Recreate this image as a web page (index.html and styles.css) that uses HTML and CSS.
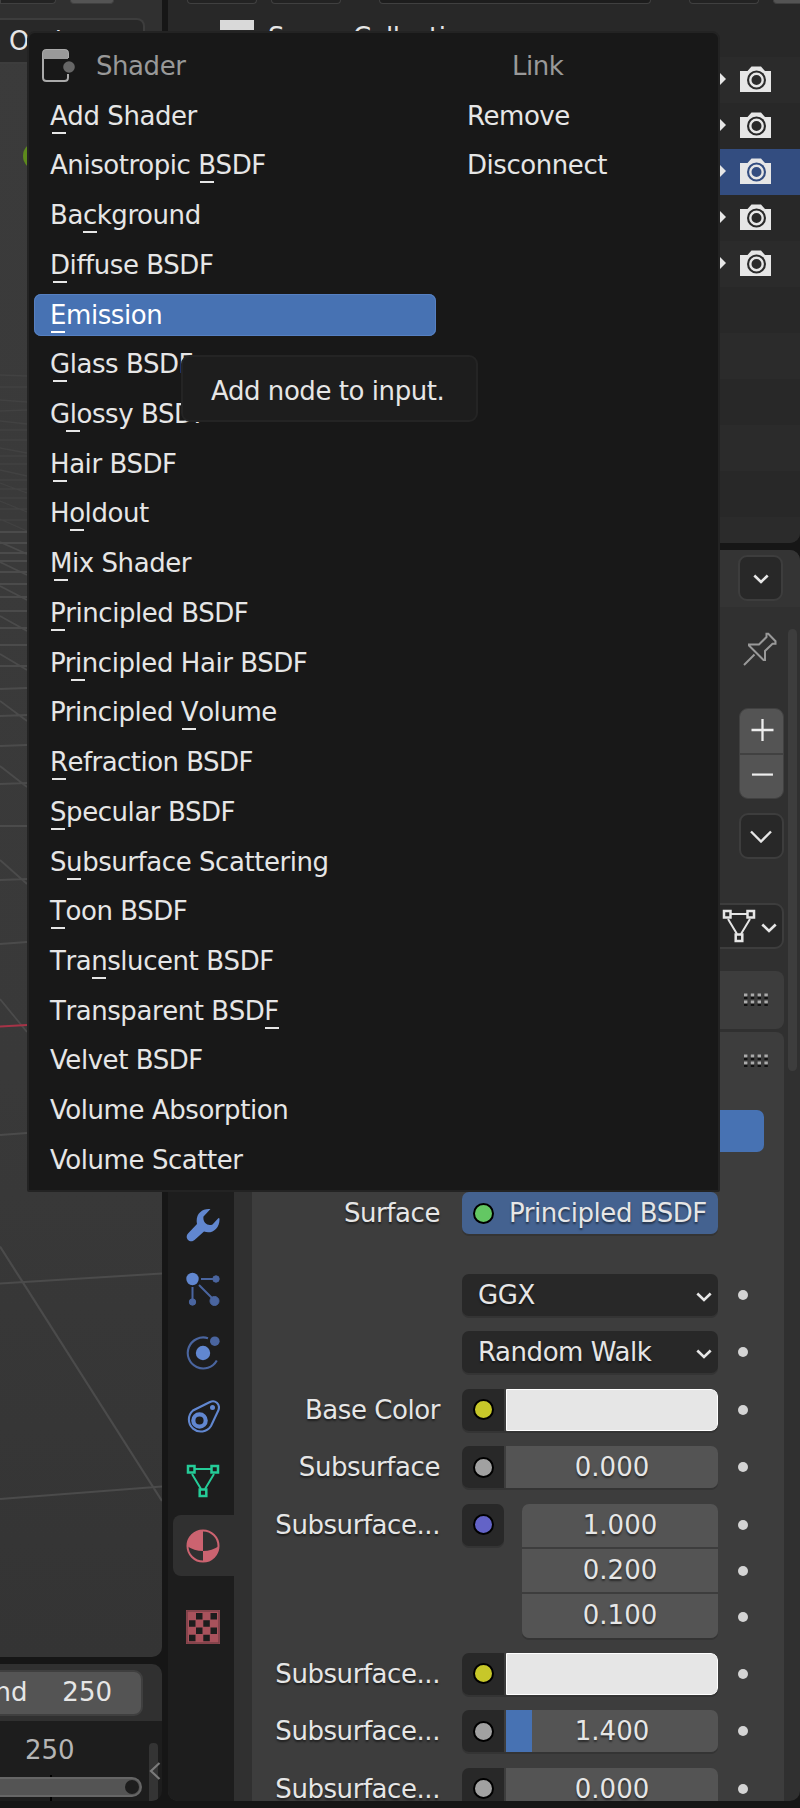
FILE: index.html
```
<!DOCTYPE html>
<html lang="en">
<head>
    <meta charset="utf-8">
    <title>Shader Node Menu</title>
    <link rel="stylesheet" href="styles.css">
</head>
<body>
    <!-- shared icons -->
    <svg class="defs" width="0" height="0">
        <symbol id="camera" viewBox="0 0 32 28">
            <path fill="#e6e6e6" d="M0 6h7.500l4-4.500h9.500l4 4.500h6v21H0z"/>
            <circle cx="16.500" cy="15" r="9.500" fill="var(--row)"/>
            <circle cx="16.500" cy="15" r="6.200" fill="var(--row)" stroke="#e6e6e6" stroke-width="2.400"/>
        </symbol>
        <symbol id="chevron" viewBox="0 0 16 10">
            <path d="M1.300 1.500l6.700 6.500 6.700-6.500" fill="none" stroke="#e6e6e6" stroke-width="2.600"/>
        </symbol>
        <symbol id="mesh" viewBox="0 0 34 34">
            <path d="M9 5h16M6 10l9 15M28 10l-9 15" fill="none" stroke="currentColor" stroke-width="2"/>
            <path d="M2 2h6.500v6.500H2zM25.500 2H32v6.500h-6.500zM13.700 25.500h6.600V32h-6.600z" fill="none" stroke="currentColor" stroke-width="2.500"/>
        </symbol>
        <symbol id="grip" viewBox="0 0 26 13">
            <path d="M1 4.500h3.400M7.800 4.500h3.400M14.600 4.500H18M21.400 4.500h3.400M1 11.500h3.400M7.800 11.500h3.400M14.600 11.500H18M21.400 11.500h3.400" stroke="#111" stroke-width="3"/>
            <path d="M1 2h3.400M7.800 2h3.400M14.600 2H18M21.400 2h3.400M1 9h3.400M7.800 9h3.400M14.600 9H18M21.400 9h3.400" stroke="#aaa" stroke-width="2.800"/>
        </symbol>
    </svg>

    <div class="app">
        <div class="left">
            <div class="viewport">
                <div class="view-header">
                    <div class="cut-row"><span class="cut wide"></span><span class="cut lit"></span></div>
                    <div class="options">Options</div>
                </div>
                <svg class="scene" width="162" height="1593" viewBox="0 64 162 1593">
                    <circle cx="37" cy="156" r="14" fill="#5d8a1c"/>
                    <g stroke="#424242" stroke-width="1.300" fill="none">
                        <path d="M0 375l27 1M0 387h27M0 400l27 2M0 411l27-1M0 421l27 3M0 430h27M0 440h27M0 448l27 5M0 456h27M0 464h27M0 470l27 6M0 480h27M0 489h27M0 483l27 10M0 498h27M0 509h27M0 501l27 11M0 520h27M0 519l27 12"/>
                    </g>
                    <g stroke="#4b4b4b" stroke-width="1.800" fill="none">
                        <path d="M0 532h27M0 543h27M0 553h27M0 542l27 12M0 561h27M0 572h27M0 584h27M0 562l27 13M0 597h27M0 586l27 14M0 611h27M0 628h27M0 616l27 15M0 645h27M0 666h27M0 654l27 16M0 689l27-1M0 701l27 20M0 716l27-1M0 746l27-1M0 766l27 21M0 784l27-1M0 826h27M0 860l27 24M0 880l27-1M0 944l27-2M0 999l27 33M0 1135l27-2"/>
                        <path d="M0 1246.500L162 1501M0 1283.500l162-10M0 1499l162-12.500" stroke-width="2.200"/>
                    </g>
                    <path d="M0 1026.500l27-1.500" stroke="#a63347" stroke-width="2"/>
                </svg>
            </div>
            <div class="timeline">
                <div class="time-header">
                    <div class="frame-end"><span>End</span><span>250</span></div>
                </div>
                <div class="time-body">
                    <div class="frame-label">250</div>
                    <div class="time-scroll"><span class="handle"></span></div>
                    <div class="frame-tick"></div>
                    <div class="frame-tick low"></div>
                    <div class="side-scroll"></div>
                    <svg class="side-arrow" width="12" height="18" viewBox="0 0 12 18"><path d="M10.500 1L2 9l8.500 8" fill="none" stroke="#7a7a7a" stroke-width="2.200"/></svg>
                </div>
            </div>
        </div>

        <div class="right">
            <div class="outliner">
                <div class="cut-row">
                    <span class="cut"></span><span class="cut"></span><span class="cut search"></span><span class="cut filter"></span><span class="cut lit"></span>
                </div>
                <div class="collection"><span class="box-icon"></span>Scene Collection</div>
                <div class="row"><span class="arrow"></span><svg width="32" height="28"><use href="#camera"/></svg></div>
                <div class="row"><span class="arrow"></span><svg width="32" height="28"><use href="#camera"/></svg></div>
                <div class="row selected"><span class="arrow"></span><svg width="32" height="28"><use href="#camera"/></svg></div>
                <div class="row"><span class="arrow"></span><svg width="32" height="28"><use href="#camera"/></svg></div>
                <div class="row"><span class="arrow"></span><svg width="32" height="28"><use href="#camera"/></svg></div>
                <div class="row"></div>
                <div class="row"></div>
                <div class="row"></div>
                <div class="row"></div>
                <div class="row"></div>
                <div class="row"></div>
            </div>

            <div class="properties">
                <div class="props-header">
                    <div class="square"><svg width="16" height="10"><use href="#chevron"/></svg></div>
                </div>
                <div class="props-main">
                    <div class="tabs">
                        <div class="tab">
                            <svg width="34" height="34" viewBox="0 0 34 34"><path fill="#6187d0" d="M24.500 1C16 0 9 6 11 16L2 25.500C-2 30 4 36 8.500 32L18 23.500c8 3 16-3 15.500-13L32.500 10l-6 6.500c-5 2-10-2-9-8z"/></svg>
                        </div>
                        <div class="tab">
                            <svg width="34" height="34" viewBox="0 0 34 34"><g fill="#4a659f" stroke="#4a659f"><path d="M15 7h14M6.500 15v14M13 13l14 14" stroke-width="2"/><circle cx="30" cy="7" r="3.200"/><circle cx="6.500" cy="30" r="3.200"/><circle cx="28.500" cy="29" r="4.500"/></g><circle cx="6.500" cy="7" r="6.200" fill="#6187d0"/></svg>
                        </div>
                        <div class="tab">
                            <svg width="34" height="34" viewBox="0 0 34 34"><path d="M22 2.200A15.500 15.500 0 1 0 30.800 24.500" fill="none" stroke="#4a659f" stroke-width="2.100"/><circle cx="28.800" cy="5.200" r="4.800" fill="#4a659f"/><circle cx="17" cy="17" r="7.200" fill="#6187d0"/></svg>
                        </div>
                        <div class="tab">
                            <svg width="34" height="34" viewBox="0 0 34 34"><g fill="none" stroke="#6187d0"><path d="M24 2L7 10.500A12 12 0 1 0 25 26L32.500 10C34.500 4 29-.5 24 2z" stroke-width="2.100"/><circle cx="13.500" cy="20.500" r="6.200" stroke-width="4.200"/></g><circle cx="26.500" cy="7.500" r="2.500" fill="#6187d0"/></svg>
                        </div>
                        <div class="tab green"><svg width="34" height="34"><use href="#mesh"/></svg></div>
                        <div class="tab active">
                            <svg width="34" height="34" viewBox="0 0 34 34"><circle cx="17" cy="17" r="15.500" fill="none" stroke="#cc6370" stroke-width="2"/><path fill="#cc6370" d="M17 1A16 16 0 0 0 1 17q7 5 16 5zM17 22q9 0 16-5A16 16 0 0 1 17 33z"/></svg>
                        </div>
                        <div class="tab last">
                            <svg width="34" height="34" viewBox="0 0 34 34"><path fill="#a9525c" d="M0 0h34v34H0z"/><path fill="#1d1d1d" d="M10 3h6.500v6.500H10zM24.500 3H31v6.500h-6.500zM3 10.300h6.500v6.500H3zM17.300 10.300h6.500v6.500h-6.500zM10 17.500h6.500V24H10zM24.500 17.500H31V24h-6.500zM3 24.700h6.500v6.500H3zM17.300 24.700h6.500v6.500h-6.500z"/><path d="M1 1h32v32H1z" fill="none" stroke="#7b4047" stroke-width="1.500"/></svg>
                        </div>
                    </div>

                    <div class="content">
                        <div class="side-tools">
                            <svg class="pin" width="34" height="34" viewBox="0 0 34 34"><path d="M1 33l10.500-10.500M6 12.500h10L23.500 5V1.800h1.800l7.200 7.400v2.600h-3L22 19v9h-1.500L6 13.500z" fill="none" stroke="#999" stroke-width="2"/></svg>
                            <div class="add-remove">
                                <svg width="43" height="44" viewBox="0 0 43 44"><path d="M11.500 21h22M22.500 10v22" stroke="#eee" stroke-width="2.300"/></svg>
                                <svg width="43" height="44" viewBox="0 0 43 44"><path d="M11.500 20.500h22" stroke="#eee" stroke-width="2.300"/></svg>
                            </div>
                            <div class="square more"><svg width="22" height="13" viewBox="0 0 22 13"><path d="M1 1.500l10 10 10-10" fill="none" stroke="#e6e6e6" stroke-width="2.400"/></svg></div>
                        </div>
                        <div class="data-link"><svg width="34" height="34"><use href="#mesh"/></svg><svg width="16" height="10"><use href="#chevron"/></svg></div>
                        <div class="panel closed"><svg width="26" height="13"><use href="#grip"/></svg></div>
                        <div class="panel surface">
                            <div class="panel-top"><svg width="26" height="13"><use href="#grip"/></svg></div>
                            <div class="use-nodes"></div>
                            <div class="prop first">
                                <label>Surface</label>
                                <div class="field node"><span class="socket shader"></span>Principled BSDF</div>
                            </div>
                            <div class="prop">
                                <label></label>
                                <div class="field select">GGX<svg width="16" height="10"><use href="#chevron"/></svg></div>
                                <span class="dot"></span>
                            </div>
                            <div class="prop">
                                <label></label>
                                <div class="field select">Random Walk<svg width="16" height="10"><use href="#chevron"/></svg></div>
                                <span class="dot"></span>
                            </div>
                            <div class="prop">
                                <label>Base Color</label>
                                <div class="field"><span class="plug"><i class="socket color"></i></span><span class="value swatch"></span></div>
                                <span class="dot"></span>
                            </div>
                            <div class="prop">
                                <label>Subsurface</label>
                                <div class="field"><span class="plug"><i class="socket"></i></span><span class="value">0.000</span></div>
                                <span class="dot"></span>
                            </div>
                            <div class="prop vector">
                                <label>Subsurface...</label>
                                <span class="plug alone"><i class="socket vec"></i></span>
                                <div class="stack"><span>1.000</span><span>0.200</span><span>0.100</span></div>
                                <div class="dots"><span class="dot"></span><span class="dot"></span><span class="dot"></span></div>
                            </div>
                            <div class="prop">
                                <label>Subsurface...</label>
                                <div class="field"><span class="plug"><i class="socket color"></i></span><span class="value swatch"></span></div>
                                <span class="dot"></span>
                            </div>
                            <div class="prop">
                                <label>Subsurface...</label>
                                <div class="field"><span class="plug"><i class="socket"></i></span><span class="value filled">1.400</span></div>
                                <span class="dot"></span>
                            </div>
                            <div class="prop">
                                <label>Subsurface...</label>
                                <div class="field"><span class="plug"><i class="socket"></i></span><span class="value">0.000</span></div>
                                <span class="dot"></span>
                            </div>
                        </div>
                        <div class="scrollbar"></div>
                    </div>
                </div>
            </div>
        </div>

        <!-- popup menu over the editors -->
        <div class="menu">
            <div class="column">
                <div class="title">
                    <svg width="34" height="34" viewBox="0 0 34 34"><path d="M26 25v3.500q0 3.500-3.500 3.500h-18Q1 32 1 28.500v-24Q1 1 4.500 1h18Q26 1 26 4.500V9" fill="none" stroke="#aaa" stroke-width="2"/><path d="M1 10V4.500Q1 1 4.500 1h18Q26 1 26 4.500V10z" fill="#999"/><circle cx="27" cy="18" r="5.800" fill="#666"/></svg>
                    Shader
                </div>
                <div class="item"><u>A</u>dd Shader</div>
                <div class="item">Anisotropic <u>B</u>SDF</div>
                <div class="item">Ba<u>c</u>kground</div>
                <div class="item"><u>D</u>iffuse BSDF</div>
                <div class="item hover"><u>E</u>mission</div>
                <div class="item"><u>G</u>lass BSDF</div>
                <div class="item">G<u>l</u>ossy BSDF</div>
                <div class="item"><u>H</u>air BSDF</div>
                <div class="item">H<u>o</u>ldout</div>
                <div class="item"><u>M</u>ix Shader</div>
                <div class="item"><u>P</u>rincipled BSDF</div>
                <div class="item">Pr<u>i</u>ncipled Hair BSDF</div>
                <div class="item">Principled <u>V</u>olume</div>
                <div class="item tight"><u>R</u>efraction BSDF</div>
                <div class="item"><u>S</u>pecular BSDF</div>
                <div class="item">S<u>u</u>bsurface Scattering</div>
                <div class="item"><u>T</u>oon BSDF</div>
                <div class="item no-kern">Tra<u>n</u>slucent BSDF</div>
                <div class="item no-kern">Transparent BSD<u>F</u></div>
                <div class="item">Velvet BSDF</div>
                <div class="item">Volume Absorption</div>
                <div class="item">Volume Scatter</div>
            </div>
            <div class="column links">
                <div class="title">Link</div>
                <div class="item">Remove</div>
                <div class="item">Disconnect</div>
            </div>
        </div>
        <div class="tooltip">Add node to input.</div>
    </div>
</body>
</html>
```
FILE: styles.css
```
* {
    box-sizing: border-box;
}
body {
    margin: 0;
    background: #161616;
    color: #e6e6e6;
    font-family: "DejaVu Sans", sans-serif;
    font-size: 26px;
    letter-spacing: -0.44px;
    white-space: nowrap;
}
svg {
    display: block;
    flex: none;
}
.defs {
    position: absolute;
}
.app {
    position: relative;
    display: flex;
    gap: 6px;
    width: 800px;
    height: 1808px;
    padding-bottom: 7px;
    overflow: hidden;
}

/* 3D viewport and timeline */
.left {
    width: 162px;
    display: flex;
    flex-direction: column;
    gap: 7px;
}
.viewport {
    height: 1657px;
    background: linear-gradient(#3b3b3b, #393939 65%, #343434);
    border-radius: 0 0 10px 0;
    overflow: hidden;
}
.view-header {
    height: 64px;
    background: #303030;
}
.cut-row {
    display: flex;
    height: 4px;
}
.cut {
    flex: none;
    width: 70px;
    height: 4px;
    background: #232323;
    border: 1px solid #404040;
    border-width: 0 1px 1px;
    border-radius: 0 0 8px 8px;
}
.cut.wide {
    width: 56px;
    margin-right: 14px;
    border-radius: 0 0 8px 0;
}
.cut.lit {
    background: #545454;
}
.view-header .lit {
    width: 44px;
}
.options {
    width: 145px;
    height: 46px;
    margin-top: 14px;
    padding-left: 9px;
    line-height: 43px;
    background: #282828;
    border: 2px solid #3d3d3d;
    border-left: 0;
    border-radius: 0 8px 8px 0;
}
.timeline {
    flex: 1;
    border-radius: 0 10px 10px 0;
    background: #1d1d1d;
    overflow: hidden;
}
.time-header {
    height: 57px;
    padding-top: 6px;
    background: #303030;
}
.frame-end {
    display: flex;
    justify-content: space-between;
    width: 167px;
    height: 46px;
    margin-left: -24px;
    padding-right: 29px;
    line-height: 40px;
    background: #545454;
    border: 2px solid #3f3f3f;
    border-radius: 9px;
    letter-spacing: 0;
}
.time-body {
    position: relative;
    height: 81px;
    padding-top: 14px;
}
.frame-label {
    padding-left: 25px;
    line-height: 30px;
    color: #b5b5b5;
    letter-spacing: 0;
}
.time-scroll {
    display: flex;
    justify-content: flex-end;
    width: 142px;
    height: 20px;
    margin-top: 12px;
    padding: 2px 1px;
    background: #545454;
    border: 2px solid #666;
    border-left: 0;
    border-radius: 0 10px 10px 0;
}
.handle {
    width: 14px;
    height: 14px;
    margin-top: -1px;
    border-radius: 50%;
    background: #1d1d1d;
}
.frame-tick {
    position: absolute;
    left: 50px;
    top: 54px;
    width: 2px;
    height: 2px;
    background: #000;
}
.frame-tick.low {
    top: 76px;
    height: 5px;
}
.side-scroll {
    position: absolute;
    left: 149px;
    top: 22px;
    width: 9px;
    height: 60px;
    border-radius: 4px 4px 0 0;
    background: #343434;
}
.side-arrow {
    position: absolute;
    left: 149px;
    top: 41px;
}

/* outliner */
.right {
    width: 632px;
    display: flex;
    flex-direction: column;
    gap: 7px;
}
.outliner {
    height: 543px;
    background: #282828;
    border-radius: 0 0 10px 0;
    overflow: hidden;
}
.outliner .cut-row {
    gap: 14px;
    padding-left: 19px;
}
.outliner .search {
    width: 272px;
    margin-left: 24px;
    background: #1d1d1d;
}
.outliner .filter {
    margin-left: 24px;
}
.collection {
    display: flex;
    align-items: flex-start;
    gap: 14px;
    height: 53px;
    padding: 16px 0 0 52px;
    line-height: 35px;
}
.box-icon {
    width: 34px;
    height: 10px;
    background: #d9d9d9;
}
.row {
    --row: #2b2b2b;
    display: flex;
    align-items: center;
    gap: 14px;
    height: 46px;
    padding-left: 552px;
    background: var(--row);
}
.row:nth-child(even) {
    --row: #282828;
}
.row.selected {
    --row: #334d80;
}
.row svg {
    margin-top: -2px;
}
.arrow {
    border-left: 6px solid #e6e6e6;
    border-top: 6px solid transparent;
    border-bottom: 6px solid transparent;
    margin-top: -2px;
}

/* properties editor */
.properties {
    height: 1251px;
    background: #303030;
    border-radius: 0 10px 10px 10px;
    overflow: hidden;
}
.props-header {
    display: flex;
    justify-content: flex-end;
    height: 57px;
    padding: 5px 17px 0 0;
    background: #343434;
}
.square {
    display: flex;
    align-items: center;
    justify-content: center;
    width: 45px;
    height: 46px;
    padding-top: 2px;
    background: #282828;
    border: 2px solid #3d3d3d;
    border-radius: 9px;
}
.square.more {
    padding: 0 2px 0 0;
}
.props-main {
    display: flex;
    height: 1194px;
}
.tabs {
    width: 66px;
    padding: 586px 0 0 5px;
    background: #1d1d1d;
}
.tab {
    display: flex;
    align-items: center;
    height: 64px;
    padding-left: 13px;
}
.tab.green {
    color: #25cc98;
}
.tab.active {
    height: 61px;
    margin-top: 2px;
    background: #303030;
    border-radius: 8px 0 0 8px;
}
.tab.last {
    margin-top: 19px;
}
.content {
    position: relative;
    width: 566px;
    padding: 25px 16px 0 18px;
}
.side-tools {
    display: flex;
    flex-direction: column;
    align-items: flex-end;
    height: 271px;
}
.pin {
    margin-right: 7px;
}
.add-remove {
    width: 45px;
    height: 91px;
    margin-top: 42px;
    background: #545454;
    border: 1px solid #414141;
    border-radius: 9px;
}
.add-remove svg + svg {
    border-top: 2px solid #414141;
}
.side-tools .square {
    margin-top: 14px;
}
.data-link {
    display: flex;
    align-items: center;
    justify-content: flex-end;
    gap: 5px;
    height: 46px;
    padding-right: 5px;
    background: #282828;
    border: 2px solid #3d3d3d;
    border-radius: 9px;
}
.data-link svg + svg {
    margin-top: 4px;
}
.panel {
    background: #3d3d3d;
    border-radius: 8px;
}
.panel.closed {
    display: flex;
    justify-content: flex-end;
    height: 58px;
    margin: 22px 0 3px;
    padding: 22px 15px 0 0;
}
.panel.surface {
    height: 790px;
    padding-top: 22px;
}
.panel-top {
    display: flex;
    justify-content: flex-end;
    height: 56px;
    padding-right: 15px;
}
.use-nodes {
    height: 42px;
    margin: 0 20px 40px 30px;
    background: #4772b3;
    border-radius: 7px;
}
.prop {
    display: flex;
    align-items: center;
    height: 42px;
    margin-bottom: 15.4px;
    text-shadow: 0 2px 2px rgba(0, 0, 0, 0.5);
}
.prop.first {
    margin-bottom: 40px;
}
.prop label {
    width: 188px;
    margin-right: 22px;
    text-align: right;
}
.field {
    display: flex;
    align-items: center;
    gap: 2px;
    width: 256px;
    height: 42px;
    border-radius: 7px;
    overflow: hidden;
    box-shadow: 0 2px 0 #343434;
}
.field.node {
    gap: 15px;
    padding-left: 11px;
    background: #446290;
}
.field.select {
    justify-content: space-between;
    padding: 0 6px 0 16px;
    background: #282828;
}
.select svg {
    margin-top: 4px;
}
.plug {
    display: flex;
    align-items: center;
    justify-content: center;
    width: 42px;
    height: 42px;
    background: #282828;
}
.plug.alone {
    border-radius: 7px;
    box-shadow: 0 2px 0 #343434;
}
.socket {
    flex: none;
    width: 21px;
    height: 21px;
    border-radius: 50%;
    border: 2px solid #000;
    background: #a1a1a1;
}
.socket.shader {
    background: #63c763;
}
.socket.color {
    background: #c7c729;
}
.socket.vec {
    background: #6363c7;
}
.value {
    width: 212px;
    line-height: 42px;
    height: 42px;
    text-align: center;
    background: #545454;
    letter-spacing: 0;
}
.value.swatch {
    background: #e6e6e6;
    border: 1px solid #fff;
    border-radius: 0 7px 7px 0;
}
.value.filled {
    background: linear-gradient(90deg, #4772b3 26px, #545454 26px);
}
.dot {
    width: 10px;
    height: 10px;
    margin-left: 20px;
    border-radius: 50%;
    background: #d4d4d4;
}
.prop.vector {
    align-items: flex-start;
    height: 134px;
}
.vector label {
    line-height: 42px;
}
.stack {
    display: flex;
    flex-direction: column;
    gap: 2px;
    width: 196px;
    height: 134px;
    margin-left: 18px;
    border-radius: 7px;
    overflow: hidden;
    letter-spacing: 0;
    box-shadow: 0 2px 0 #343434;
}
.stack span {
    flex: 1;
    line-height: 42px;
    text-align: center;
    background: #545454;
}
.dots {
    display: flex;
    flex-direction: column;
    gap: 36px;
    padding-top: 16px;
}
.scrollbar {
    position: absolute;
    right: 3px;
    top: 22px;
    width: 9px;
    height: 442px;
    border-radius: 5px;
    background: #3d3d3d;
}

/* popup menu */
.menu {
    position: absolute;
    left: 27px;
    top: 31px;
    width: 693px;
    height: 1161px;
    padding: 12px 4px 0 5px;
    display: flex;
    gap: 15px;
    background: #181818;
    border: 2px solid #232323;
    border-radius: 8px 8px 2px 2px;
}
.column {
    display: flex;
    flex-direction: column;
    gap: 7.72px;
    width: 402px;
}
.title {
    display: flex;
    align-items: center;
    gap: 20px;
    height: 42px;
    padding-left: 8px;
    color: #999;
}
.item {
    height: 42px;
    padding-left: 16px;
    line-height: 42px;
    border-radius: 7px;
}
.item.hover {
    background: #4772b3;
    box-shadow: inset 0 0 0 1px #5680c2;
    color: #fff;
}
.item.tight {
    letter-spacing: -0.55px;
}
.item.no-kern {
    font-kerning: none;
}
.item u {
    position: relative;
    text-decoration: none;
}
/* shortcut mark, same length under every letter */
.item u::after {
    content: "";
    position: absolute;
    left: 50%;
    bottom: -3px;
    width: 14px;
    height: 2px;
    margin-left: -7px;
    background: currentColor;
}
.links {
    width: 250px;
}
.links .title {
    padding-left: 61px;
}
.tooltip {
    position: absolute;
    left: 181px;
    top: 355px;
    width: 297px;
    height: 67px;
    padding: 2px 0 0 28px;
    line-height: 65px;
    background: #1d1d1d;
    border: 2px solid #242424;
    border-radius: 9px;
}
```
